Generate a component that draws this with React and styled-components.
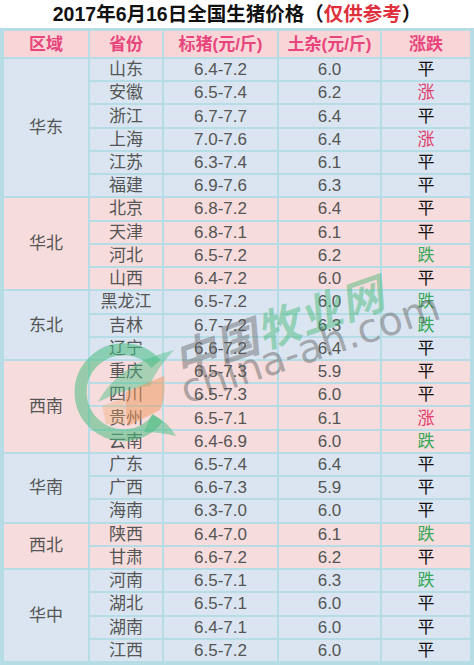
import React from 'react';
import styled, { createGlobalStyle } from 'styled-components';

const GlobalStyle = createGlobalStyle`
  html, body {
    margin: 0;
    padding: 0;
    background: #ffffff;
  }
  body {
    font-family: "Liberation Sans", "Noto Sans CJK SC", sans-serif;
  }
`;

const colors = {
  line: '#b6dce6',
  blue: '#dae5f1',
  pink: '#f6dcdc',
  head: '#f8d6d8',
  headText: '#e8457c',
  text: '#555555',
  up: '#e23c6c',
  down: '#38a95a',
  flat: '#111111',
};

const Page = styled.div`
  position: relative;
  width: 474px;
  height: 665px;
  overflow: hidden;
`;

const Title = styled.h1`
  margin: 0;
  height: 28px;
  line-height: 28px;
  text-align: center;
  font-size: 19.5px;
  font-weight: bold;
  color: #111;
  font-family: "Liberation Sans", "Noto Sans CJK SC", sans-serif;

  span {
    color: #e0303c;
  }
`;

const Table = styled.div`
  display: grid;
  grid-template-columns: 84px 72px 113px 101px 88px;
  grid-template-rows: 26px repeat(26, 1fr);
  gap: 2px;
  height: 630px;
  padding: 3px 4px 4px 4px;
  background: ${colors.line};
`;

const Cell = styled.div`
  display: flex;
  align-items: center;
  justify-content: center;
  background: ${p => colors[p.$tone] || colors.blue};
  color: ${p => p.$color || colors.text};
  font-size: 17px;
  line-height: 1;
  white-space: nowrap;
  grid-row: ${p => (p.$span ? `span ${p.$span}` : 'auto')};
  grid-column: ${p => (p.$span ? '1' : 'auto')};
`;

const HeadCell = styled(Cell)`
  background: ${colors.head};
  color: ${colors.headText};
  font-weight: bold;
  font-size: 17px;
`;

const Watermark = styled.svg`
  position: absolute;
  left: 0;
  top: 0;
  pointer-events: none;
`;

const regions = [
  {
    name: '华东',
    tone: 'blue',
    rows: [
      ['山东', '6.4-7.2', '6.0', '平'],
      ['安徽', '6.5-7.4', '6.2', '涨'],
      ['浙江', '6.7-7.7', '6.4', '平'],
      ['上海', '7.0-7.6', '6.4', '涨'],
      ['江苏', '6.3-7.4', '6.1', '平'],
      ['福建', '6.9-7.6', '6.3', '平'],
    ],
  },
  {
    name: '华北',
    tone: 'pink',
    rows: [
      ['北京', '6.8-7.2', '6.4', '平'],
      ['天津', '6.8-7.1', '6.1', '平'],
      ['河北', '6.5-7.2', '6.2', '跌'],
      ['山西', '6.4-7.2', '6.0', '平'],
    ],
  },
  {
    name: '东北',
    tone: 'blue',
    rows: [
      ['黑龙江', '6.5-7.2', '6.0', '跌'],
      ['吉林', '6.7-7.2', '6.3', '跌'],
      ['辽宁', '6.6-7.2', '6.4', '平'],
    ],
  },
  {
    name: '西南',
    tone: 'pink',
    rows: [
      ['重庆', '6.5-7.3', '5.9', '平'],
      ['四川', '6.5-7.3', '6.0', '平'],
      ['贵州', '6.5-7.1', '6.1', '涨'],
      ['云南', '6.4-6.9', '6.0', '跌'],
    ],
  },
  {
    name: '华南',
    tone: 'blue',
    rows: [
      ['广东', '6.5-7.4', '6.4', '平'],
      ['广西', '6.6-7.3', '5.9', '平'],
      ['海南', '6.3-7.0', '6.0', '平'],
    ],
  },
  {
    name: '西北',
    tone: 'pink',
    rows: [
      ['陕西', '6.4-7.0', '6.1', '跌'],
      ['甘肃', '6.6-7.2', '6.2', '平'],
    ],
  },
  {
    name: '华中',
    tone: 'blue',
    rows: [
      ['河南', '6.5-7.1', '6.3', '跌'],
      ['湖北', '6.5-7.1', '6.0', '平'],
      ['湖南', '6.4-7.1', '6.0', '平'],
      ['江西', '6.5-7.2', '6.0', '平'],
    ],
  },
];

const trendColor = t => (t === '涨' ? colors.up : t === '跌' ? colors.down : colors.flat);

// china-ah.com watermark: ring logo + rotated site name
const Logo = () => (
  <Watermark width="474" height="665" viewBox="0 0 474 665">
    <path
      d="M156 364 A43 43 0 1 0 158 418"
      fill="none"
      stroke="rgba(72,190,130,0.55)"
      strokeWidth="12"
    />
    <path
      d="M152 414 Q168 422 176 436 Q160 432 144 432 Z"
      fill="rgba(72,190,130,0.5)"
    />
    <path
      d="M98 402 Q118 364 174 350 Q154 372 150 386 Q126 388 98 402 Z"
      fill="rgba(72,190,130,0.45)"
    />
    <path
      d="M126 392 L164 376 Q166 398 160 410 L128 426 Q124 408 126 392 Z"
      fill="rgba(240,150,90,0.5)"
    />
    <path
      d="M102 406 L124 398 L126 424 L106 424 Z"
      fill="rgba(240,170,110,0.35)"
    />
    <text
      x="180"
      y="378"
      transform="rotate(-19 180 378)"
      fontSize="43"
      fontWeight="bold"
      fontStyle="italic"
      letterSpacing="1"
      fontFamily='"Noto Sans CJK SC", sans-serif'
    >
      <tspan fill="rgba(100,100,100,0.45)">中国</tspan>
      <tspan fill="rgba(60,180,110,0.45)">牧业网</tspan>
    </text>
    <text
      x="186"
      y="404"
      transform="rotate(-18.5 186 404)"
      fontSize="40"
      fill="rgba(90,90,90,0.45)"
      fontFamily='"DejaVu Sans", sans-serif'
    >
      china-ah.com
    </text>
  </Watermark>
);

const App = () => {
  return (
    <Page>
      <GlobalStyle />
      <Title>
        2017年6月16日全国生猪价格（<span>仅供参考</span>）
      </Title>
      <Table>
        <HeadCell>区域</HeadCell>
        <HeadCell>省份</HeadCell>
        <HeadCell>标猪(元/斤)</HeadCell>
        <HeadCell>土杂(元/斤)</HeadCell>
        <HeadCell>涨跌</HeadCell>
        {regions.map(region =>
          region.rows.map((row, i) => (
            <React.Fragment key={region.name + row[0]}>
              {i === 0 && (
                <Cell $tone={region.tone} $span={region.rows.length}>
                  {region.name}
                </Cell>
              )}
              <Cell $tone={region.tone}>{row[0]}</Cell>
              <Cell $tone={region.tone}>{row[1]}</Cell>
              <Cell $tone={region.tone}>{row[2]}</Cell>
              <Cell $tone={region.tone} $color={trendColor(row[3])}>
                {row[3]}
              </Cell>
            </React.Fragment>
          ))
        )}
      </Table>
      <Logo />
    </Page>
  );
};

export default App;
